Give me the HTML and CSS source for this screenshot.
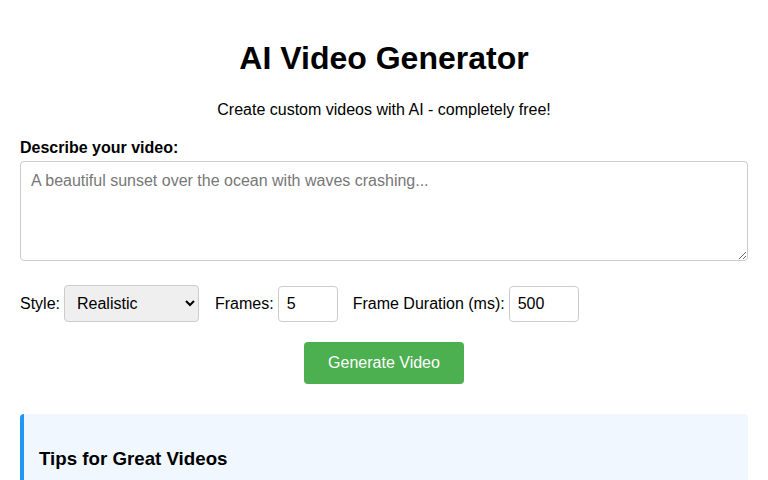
FILE: index.html
```html
<!DOCTYPE html>
<html lang="en">
<head>
<meta charset="utf-8">
<title>AI Video Generator</title>
<link rel="stylesheet" href="styles.css">
</head>
<body>
<div class="container">
  <h1>AI Video Generator</h1>
  <p class="subtitle">Create custom videos with AI - completely free!</p>
  <div class="form-group">
    <label class="block-label" for="prompt">Describe your video:</label>
    <textarea id="prompt" placeholder="A beautiful sunset over the ocean with waves crashing..."></textarea>
  </div>
  <div class="controls">
    <label for="style">Style:</label>
    <select id="style" class="style-select">
      <option>Realistic</option>
      <option>Cartoon</option>
      <option>Abstract</option>
    </select>
    <label for="frames" class="gap">Frames:</label>
    <input id="frames" class="num frames" type="number" value="5">
    <label for="dur" class="gap gap2">Frame Duration (ms):</label>
    <input id="dur" class="num dur" type="number" value="500">
  </div>
  <div class="btn-row">
    <button class="generate">Generate Video</button>
  </div>
  <div class="tips">
    <h3>Tips for Great Videos</h3>
  </div>
</div>
</body>
</html>
```
FILE: styles.css
```css
html, body {
  margin: 0;
  padding: 0;
  background: #fff;
}
body {
  font-family: "Liberation Sans", Arial, sans-serif;
  font-size: 16px;
  color: #000;
}
.container {
  max-width: 728px;
  margin: 0 auto;
  padding: 20px;
}
h1 {
  text-align: center;
  font-size: 32px;
  margin: 20px 0 24px;
  line-height: 37px;
}
.subtitle {
  text-align: center;
  margin: 0 0 20px;
  line-height: 18px;
}
.form-group {
  margin-bottom: 24px;
}
.block-label {
  display: block;
  font-weight: bold;
  line-height: 18px;
  margin-bottom: 4px;
}
textarea {
  display: block;
  box-sizing: border-box;
  width: 100%;
  height: 100px;
  padding: 10px;
  border: 1px solid #ccc;
  border-radius: 4px;
  font-family: "Liberation Sans", Arial, sans-serif;
  font-size: 16px;
  resize: vertical;
}
textarea::placeholder {
  color: #777;
}
.controls {
  display: flex;
  align-items: center;
  height: 37px;
}
.controls label {
  margin-right: 4px;
}
.controls .gap {
  margin-left: 16px;
}
.controls .gap2 {
  margin-left: 15px;
}
.style-select {
  box-sizing: border-box;
  width: 135px;
  height: 37px;
  padding: 8px;
  border: 1px solid #ccc;
  border-radius: 4px;
  background-color: #efefef;
  font-family: "Liberation Sans", Arial, sans-serif;
  font-size: 16px;
  color: #000;
}
.num {
  box-sizing: border-box;
  height: 36px;
  padding: 8px;
  border: 1px solid #ccc;
  border-radius: 4px;
  font-family: "Liberation Sans", Arial, sans-serif;
  font-size: 16px;
  color: #000;
  -moz-appearance: textfield;
}
.num::-webkit-outer-spin-button,
.num::-webkit-inner-spin-button {
  -webkit-appearance: none;
  margin: 0;
}
.frames { width: 60px; }
.dur { width: 70px; }
.btn-row {
  display: flex;
  justify-content: center;
  margin-top: 20px;
}
.generate {
  background: #4CAF50;
  color: #fff;
  border: none;
  border-radius: 4px;
  padding: 12px 24px;
  font-family: "Liberation Sans", Arial, sans-serif;
  font-size: 16px;
  line-height: 18px;
  cursor: pointer;
}
.tips {
  margin-top: 30px;
  background: #f0f7ff;
  border-left: 4px solid #2196F3;
  border-radius: 4px;
  padding: 15px;
}
.tips h3 {
  font-size: 18.72px;
  margin: 19px 0;
  line-height: 22px;
}
```
